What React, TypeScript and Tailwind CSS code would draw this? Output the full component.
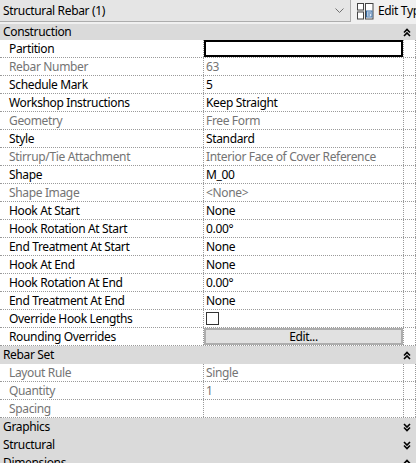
import React from 'react';

type Kind = 'text' | 'input' | 'checkbox' | 'button';

interface Row {
  label: string;
  value?: string;
  kind?: Kind;
  disabled?: boolean;
}

const construction: Row[] = [
  { label: 'Partition', kind: 'input' },
  { label: 'Rebar Number', value: '63', disabled: true },
  { label: 'Schedule Mark', value: '5' },
  { label: 'Workshop Instructions', value: 'Keep Straight' },
  { label: 'Geometry', value: 'Free Form', disabled: true },
  { label: 'Style', value: 'Standard' },
  { label: 'Stirrup/Tie Attachment', value: 'Interior Face of Cover Reference', disabled: true },
  { label: 'Shape', value: 'M_00' },
  { label: 'Shape Image', value: '<None>', disabled: true },
  { label: 'Hook At Start', value: 'None' },
  { label: 'Hook Rotation At Start', value: '0.00°' },
  { label: 'End Treatment At Start', value: 'None' },
  { label: 'Hook At End', value: 'None' },
  { label: 'Hook Rotation At End', value: '0.00°' },
  { label: 'End Treatment At End', value: 'None' },
  { label: 'Override Hook Lengths', kind: 'checkbox' },
  { label: 'Rounding Overrides', kind: 'button' },
];

const rebarSet: Row[] = [
  { label: 'Layout Rule', value: 'Single', disabled: true },
  { label: 'Quantity', value: '1', disabled: true },
  { label: 'Spacing', value: '', disabled: true },
];

function DoubleChevron({ up }: { up: boolean }) {
  return (
    <svg width="8" height="9" viewBox="0 0 8 9" className="shrink-0">
      <path
        d={up ? 'M1 4.5 L4 1.5 L7 4.5 M1 8 L4 5 L7 8' : 'M1 1 L4 4 L7 1 M1 4.5 L4 7.5 L7 4.5'}
        fill="none"
        stroke="#000"
        strokeWidth="1.6"
      />
    </svg>
  );
}

function EditTypeIcon() {
  return (
    <svg width="17" height="17" viewBox="0 0 17 17" className="shrink-0">
      <rect x="0.5" y="0.5" width="6" height="6.5" fill="#fff" stroke="#444" />
      <rect x="0.5" y="9" width="6" height="7" fill="#fff" stroke="#444" />
      <rect x="8.5" y="0.5" width="7.5" height="15.5" fill="#fff" stroke="#444" />
      <rect x="9.5" y="8" width="5.5" height="6" fill="#dfe9f5" stroke="#3a6ea5" />
      <path d="M10.5 10 H14 M10.5 12 H13" stroke="#3a6ea5" strokeWidth="1" />
    </svg>
  );
}

function Header({ title, up }: { title: string; up: boolean }) {
  return (
    <div className="flex h-[18px] items-center justify-between bg-[#dadada] pl-[3px] pr-[5px] text-black">
      <span>{title}</span>
      <DoubleChevron up={up} />
    </div>
  );
}

function Value({ row }: { row: Row }) {
  if (row.kind === 'input') {
    return <div className="h-[17px] w-full border-2 border-black bg-white" />;
  }
  if (row.kind === 'checkbox') {
    return <div className="ml-[2px] h-[13px] w-[13px] border border-[#333] bg-white" />;
  }
  if (row.kind === 'button') {
    return (
      <div className="flex h-[17px] w-full items-center justify-center border-2 border-[#adadad] bg-[#e1e1e1] text-black">
        Edit...
      </div>
    );
  }
  return <span className="pl-[2px] whitespace-nowrap">{row.value}</span>;
}

function PropRow({ row }: { row: Row }) {
  const color = row.disabled ? 'text-[#747474]' : 'text-black';
  return (
    <div className={`flex h-[18px] border-b border-dotted border-[#9a9a9a] bg-white ${color}`}>
      <div className="flex w-[204px] shrink-0 items-center overflow-hidden border-r border-dotted border-[#9a9a9a] pl-[9px] whitespace-nowrap">
        {row.label}
      </div>
      <div className="flex w-[200px] shrink-0 items-center overflow-hidden border-r border-dotted border-[#9a9a9a]">
        <Value row={row} />
      </div>
      <div className="flex-1 border-r border-dotted border-[#9a9a9a]" />
    </div>
  );
}

export default function App() {
  return (
    <div
      className="h-[463px] w-[416px] overflow-hidden bg-[#f0f0f0] text-[12px] leading-none tracking-[-0.35px]"
      style={{ fontFamily: '"Noto Sans", "Liberation Sans", sans-serif' }}
    >
      <div className="flex h-[24px] items-start">
        <div className="flex h-[22px] w-[351px] shrink-0 items-center justify-between border-r border-b border-[#adadad] bg-[#e5e5e5] pl-[3px] pr-[6px]">
          <span>Structural Rebar (1)</span>
          <svg width="9" height="6" viewBox="0 0 9 6">
            <path d="M0.5 0.5 L4.5 4.5 L8.5 0.5" fill="none" stroke="#707070" strokeWidth="1" />
          </svg>
        </div>
        <div className="flex h-[22px] items-center gap-[4px] pl-[6px] whitespace-nowrap">
          <EditTypeIcon />
          <span>Edit Type</span>
        </div>
      </div>
      <div className="flex h-[16px] items-center justify-between bg-[#dadada] pl-[3px] pr-[5px]">
        <span>Construction</span>
        <DoubleChevron up />
      </div>
      {construction.map((r) => (
        <PropRow key={r.label} row={r} />
      ))}
      <Header title="Rebar Set" up />
      {rebarSet.map((r) => (
        <PropRow key={r.label} row={r} />
      ))}
      <Header title="Graphics" up={false} />
      <Header title="Structural" up={false} />
      <Header title="Dimensions" up />
    </div>
  );
}
